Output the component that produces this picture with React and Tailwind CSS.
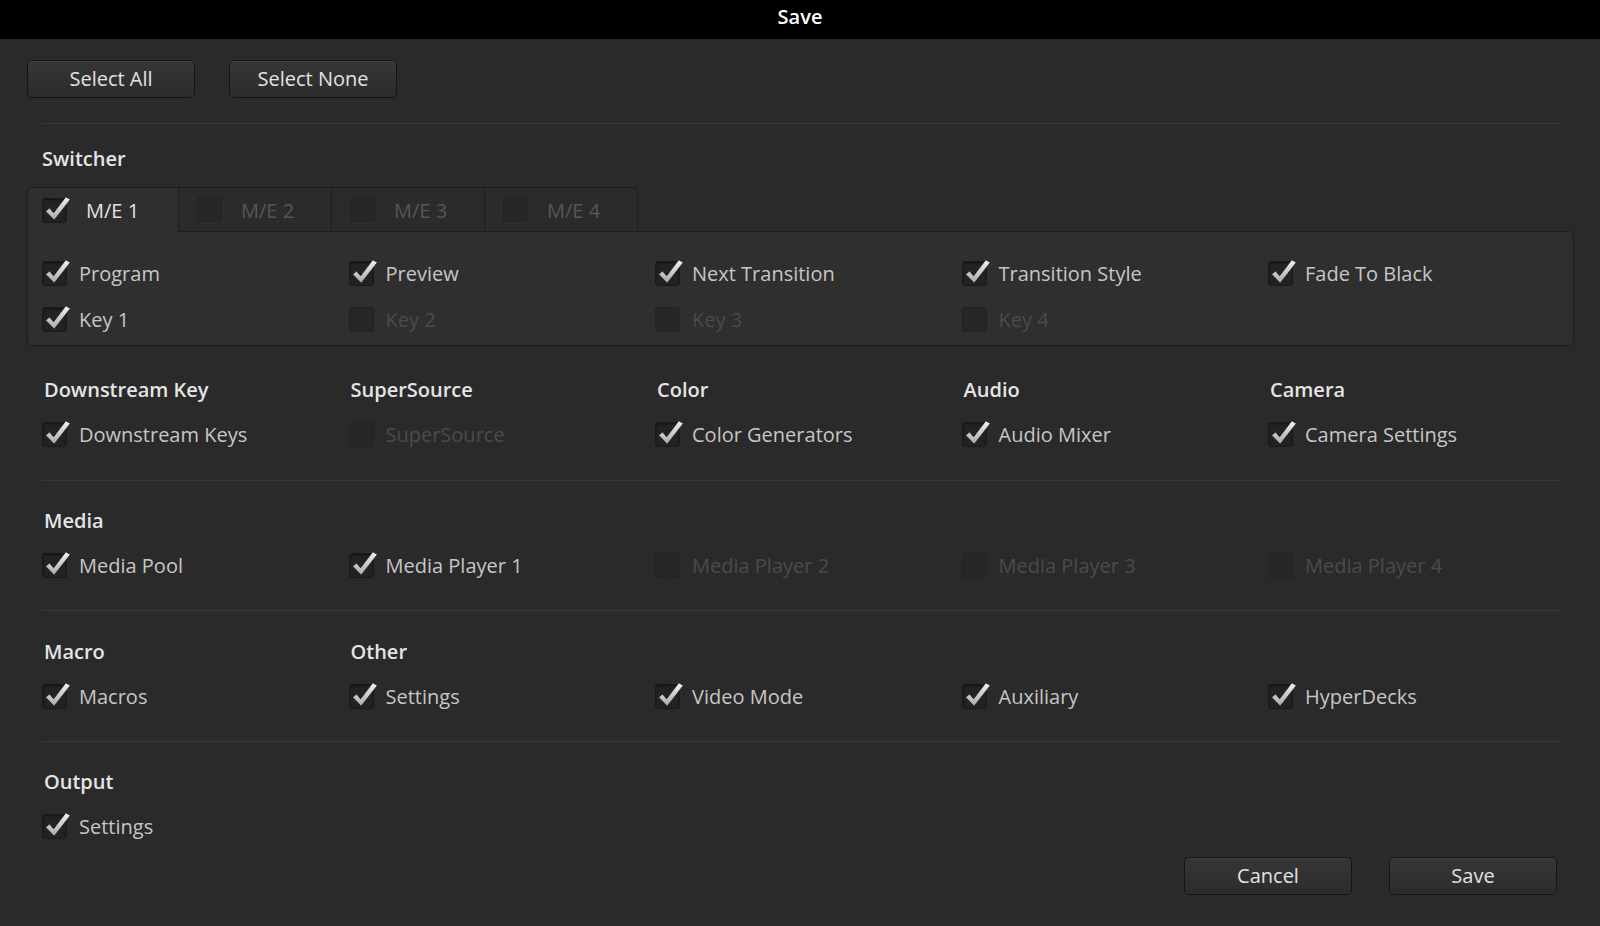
import React from "react";

function Check() {
  return (
    <svg
      className="absolute left-[-1px] top-[-5px] overflow-visible"
      width="30"
      height="30"
      viewBox="0 0 30 30"
    >
      <defs>
        <linearGradient id="ckg" x1="0" y1="0" x2="0" y2="1">
          <stop offset="0" stopColor="#f2f2f2" />
          <stop offset="1" stopColor="#a8a8a8" />
        </linearGradient>
      </defs>
      <path
        d="M3.6 17.2 L7.6 14 L11.6 18.8 L23.8 2.8 L28.4 5.4 L12.2 26.2 Z"
        fill="url(#ckg)"
        stroke="#1a1a1a"
        strokeWidth="0.8"
        strokeLinejoin="round"
      />
    </svg>
  );
}

function Box({ on }) {
  return (
    <div
      className={
        "relative w-[25px] h-[25px] shrink-0 rounded-[3px] border " +
        (on
          ? "bg-[#222222] border-[#1a1a1a] shadow-[inset_0_1px_2px_rgba(0,0,0,0.5)]"
          : "bg-[#272727] border-[#232323]")
      }
    >
      {on && <Check />}
    </div>
  );
}

function Item({ label, on }) {
  return (
    <div className="flex items-center h-[26px] gap-[12px]">
      <Box on={on} />
      <span
        className={
          "text-[20px] leading-none whitespace-nowrap pt-[2px] " +
          (on ? "text-[#c6c6c6]" : "text-[#4b4b4b]")
        }
      >
        {label}
      </span>
    </div>
  );
}

function Btn({ children, w = "w-[168px]" }) {
  return (
    <button
      className={
        w +
        " h-[38px] rounded-[5px] border border-[#151515] bg-gradient-to-b from-[#363636] to-[#2c2c2c] text-[20px] text-[#e2e2e2] shadow-[inset_0_1px_0_rgba(255,255,255,0.06)]"
      }
    >
      {children}
    </button>
  );
}

function Heading({ children }) {
  return (
    <div className="h-[26px] flex items-center pl-[2px] text-[20px] font-semibold text-[#e4e4e4] whitespace-nowrap">
      {children}
    </div>
  );
}

const Sep = () => <div className="ml-[42px] mr-[39px] h-px bg-[#393939]" />;

function Section({ cols }) {
  return (
    <div className="ml-[42px] grid grid-cols-[repeat(5,306.5px)]">
      {cols.map((c, i) => (
        <div key={i} className="flex flex-col">
          <div className="h-[26px]">{c.h ? <Heading>{c.h}</Heading> : null}</div>
          <div className="mt-[18px]">
            <Item label={c.l} on={c.on} />
          </div>
        </div>
      ))}
    </div>
  );
}

export default function App() {
  const tabs = [
    { l: "M/E 1", on: true },
    { l: "M/E 2", on: false },
    { l: "M/E 3", on: false },
    { l: "M/E 4", on: false },
  ];
  return (
    <div
      className="w-full h-[926px] bg-[#2a2a2a] flex flex-col overflow-hidden"
      style={{ fontFamily: '"Open Sans", "Noto Sans", sans-serif' }}
    >
      <div className="h-[39px] shrink-0 bg-black flex items-center justify-center pb-[6px] text-[20px] font-semibold text-white">
        Save
      </div>

      <div className="mt-[21px] ml-[27px] flex gap-[34px]">
        <Btn>Select All</Btn>
        <Btn>Select None</Btn>
      </div>

      <div className="mt-[25px]">
        <Sep />
      </div>

      <div className="mt-[22px] ml-[42px]">
        <Heading>
          <span className="-ml-[2px]">Switcher</span>
        </Heading>
      </div>

      <div className="mt-[15px] ml-[27px] mr-[26px]">
        <div className="flex">
          {tabs.map((t, i) =>
            i === 0 ? (
              <div
                key={i}
                className="relative z-10 w-[152px] h-[45px] -mb-px flex items-center gap-[19px] pl-[14px] bg-[#2f2f2f] border-l border-t border-r border-[#1e1e1e] rounded-tl-[5px]"
              >
                <Box on />
                <span className="text-[20px] text-[#e2e2e2] pt-[2px]">{t.l}</span>
              </div>
            ) : (
              <div
                key={i}
                className={
                  "w-[153px] h-[44px] flex items-center gap-[19px] pl-[18px] bg-[#2b2b2b] border-t border-r border-[#1e1e1e] " +
                  (i === 3 ? "rounded-tr-[5px]" : "")
                }
              >
                <Box on={false} />
                <span className="text-[20px] text-[#565656] pt-[2px]">{t.l}</span>
              </div>
            )
          )}
        </div>
        <div className="bg-[#2f2f2f] border border-[#1e1e1e] rounded-b-[5px] rounded-tr-[5px] pt-[28px] pb-[13px] pl-[14px]">
          <div className="grid grid-cols-[repeat(5,306.5px)] gap-y-[20px]">
            <Item label="Program" on />
            <Item label="Preview" on />
            <Item label="Next Transition" on />
            <Item label="Transition Style" on />
            <Item label="Fade To Black" on />
            <Item label="Key 1" on />
            <Item label="Key 2" on={false} />
            <Item label="Key 3" on={false} />
            <Item label="Key 4" on={false} />
          </div>
        </div>
      </div>

      <div className="mt-[31px]">
        <Section
          cols={[
            { h: "Downstream Key", l: "Downstream Keys", on: true },
            { h: "SuperSource", l: "SuperSource", on: false },
            { h: "Color", l: "Color Generators", on: true },
            { h: "Audio", l: "Audio Mixer", on: true },
            { h: "Camera", l: "Camera Settings", on: true },
          ]}
        />
      </div>

      <div className="mt-[33px]">
        <Sep />
      </div>

      <div className="mt-[27px]">
        <Section
          cols={[
            { h: "Media", l: "Media Pool", on: true },
            { l: "Media Player 1", on: true },
            { l: "Media Player 2", on: false },
            { l: "Media Player 3", on: false },
            { l: "Media Player 4", on: false },
          ]}
        />
      </div>

      <div className="mt-[32px]">
        <Sep />
      </div>

      <div className="mt-[28px]">
        <Section
          cols={[
            { h: "Macro", l: "Macros", on: true },
            { h: "Other", l: "Settings", on: true },
            { l: "Video Mode", on: true },
            { l: "Auxiliary", on: true },
            { l: "HyperDecks", on: true },
          ]}
        />
      </div>

      <div className="mt-[32px]">
        <Sep />
      </div>

      <div className="mt-[27px] ml-[42px]">
        <Heading>Output</Heading>
        <div className="mt-[18px]">
          <Item label="Settings" on />
        </div>
      </div>

      <div className="mt-[18px] mr-[43px] flex justify-end gap-[37px]">
        <Btn>Cancel</Btn>
        <Btn>Save</Btn>
      </div>
    </div>
  );
}
